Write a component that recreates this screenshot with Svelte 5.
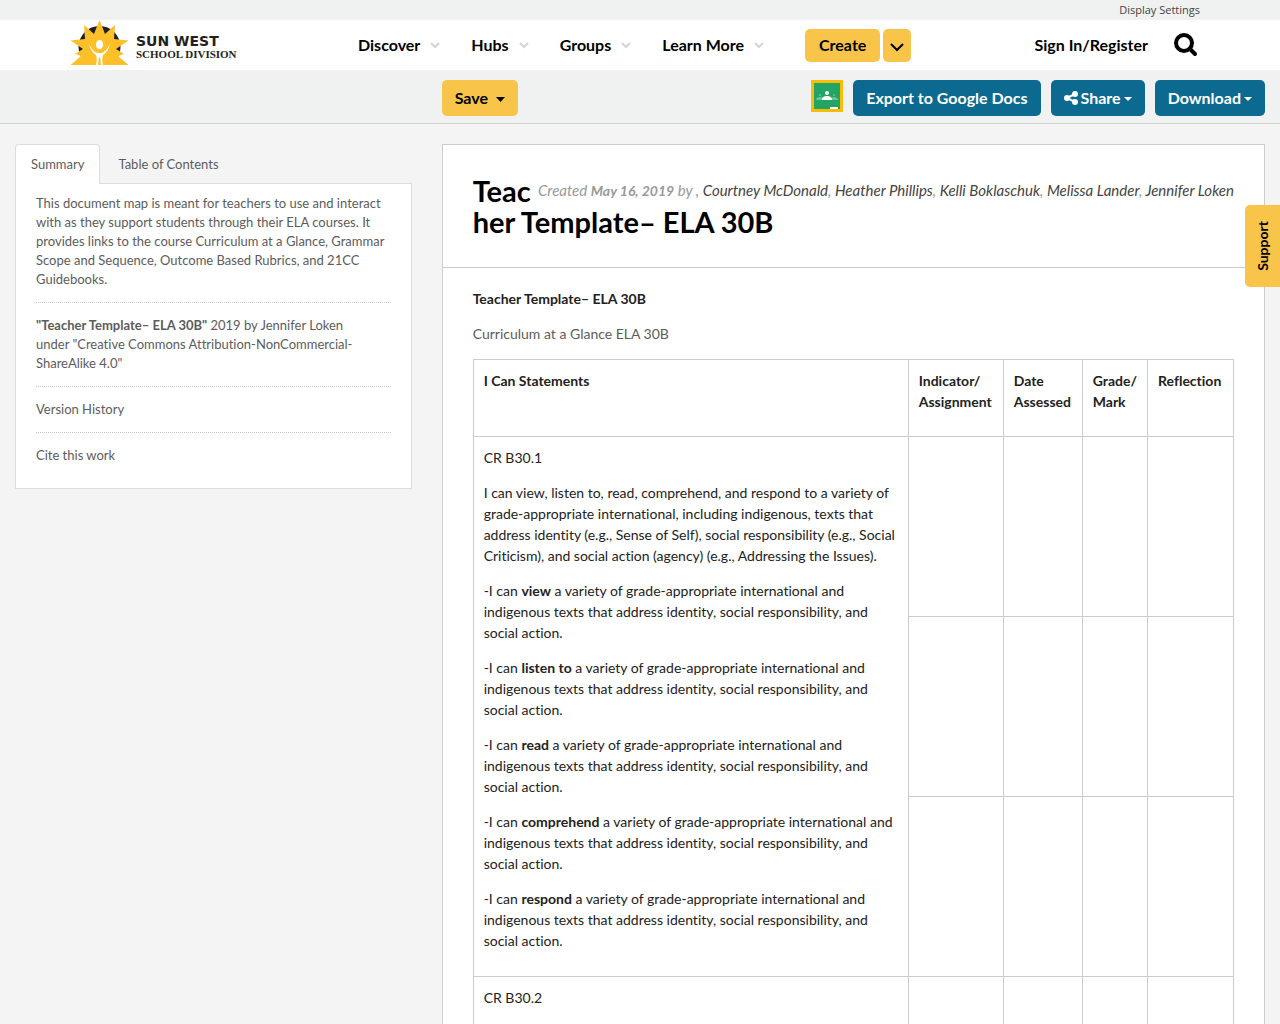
<script>
  const menu = ['Discover', 'Hubs', 'Groups', 'Learn More'];

  const authors = [
    'Courtney McDonald',
    'Heather Phillips',
    'Kelli Boklaschuk',
    'Melissa Lander',
    'Jennifer Loken',
  ];

  const skills = ['view', 'listen to', 'read', 'comprehend', 'respond'];

  let tab = 'summary';
</script>

<div class="settings">
  <div class="container">
    <a href="#settings">Display Settings</a>
  </div>
</div>

<header>
  <div class="container bar">
    <a class="logo" href="#home" aria-label="Sun West School Division">
      <svg width="60" height="45" viewBox="0 0 60 45">
        <circle cx="29.500" cy="27" r="21" fill="#231f20" />
        <path
          d="M29.500 0L35 14l10-9-1 14 14.500 1.500L46 29l8 5-6 2 10.500 9H.5L11 36l-6-2 8-5L.5 20.500 15 19 14 5l10 9z"
          fill="#fdc029"
        />
        <ellipse cx="29.500" cy="24.500" rx="3.500" ry="4.500" fill="#fff" />
        <path
          d="M19 24c1 5 4 9 7 11 1 3 1 6 0 10h2l1-8h1l1 8h2c-1-4-1-7 0-10 3-2 6-6 7-11-2 4-5 8-8 9h-5c-3-1-6-5-8-9z"
          fill="#fff"
        />
      </svg>
      <span class="words">
        <span class="name">SUN WEST</span>
        <span class="sub">SCHOOL DIVISION</span>
      </span>
    </a>

    <nav>
      {#each menu as item}
        <a href="#menu">
          {item}
          <svg width="10" height="9" viewBox="0 0 10 9">
            <path d="M1 3l4 4 4-4" fill="none" stroke="#d4d4d4" stroke-width="2" />
          </svg>
        </a>
      {/each}
    </nav>

    <div class="create">
      <button class="yellow">Create</button>
      <button class="yellow more" aria-label="More create options">
        <svg width="14" height="9" viewBox="0 0 14 9">
          <path d="M1 1l6 6 6-6" fill="none" stroke="#000" stroke-width="2" />
        </svg>
      </button>
    </div>

    <a class="signin" href="#signin">Sign In/Register</a>
    <button class="search" aria-label="Search">
      <svg width="24" height="24" viewBox="0 0 24 24">
        <circle cx="10" cy="10" r="8" fill="none" stroke="#000" stroke-width="4" />
        <path d="M16 16l5 5" stroke="#000" stroke-width="4" stroke-linecap="round" />
      </svg>
    </button>
  </div>
</header>

<div class="toolbar">
  <div class="left"></div>
  <div class="right">
    <button class="yellow save">
      Save
      <svg width="9" height="7" viewBox="0 0 9 7"><path d="M0 2h9L4.500 7z" /></svg>
    </button>
    <a class="classroom" href="#classroom" aria-label="Google Classroom">
      <svg width="32" height="32" viewBox="0 0 32 32">
        <path fill="#fbbc05" d="M0 0h32v32H0z" />
        <path fill="#21a464" d="M3 3h26v26H3z" />
        <path
          fill="#69c596"
          d="M5 20c0-2 2-3 4-3s4 1 4 3zM19 20c0-2 2-3 4-3s4 1 4 3z"
        />
        <circle cx="9" cy="15" r="1" fill="#69c596" />
        <circle cx="23" cy="15" r="1" fill="#69c596" />
        <circle cx="16" cy="13" r="2" fill="#fff" />
        <path fill="#fff" d="M11 20c0-3 2-4 5-4s5 1 5 4zM19 27h8v2h-8z" />
      </svg>
    </a>
    <button class="blue">Export to Google Docs</button>
    <button class="blue">
      <svg width="14" height="14" viewBox="0 0 14 14">
        <path d="M11 3L3 7l8 4" fill="none" stroke="#fff" stroke-width="2" />
        <circle cx="11" cy="3" r="3" /><circle cx="3" cy="7" r="3" /><circle cx="11" cy="11" r="3" />
      </svg>
      Share
      <svg width="8" height="6" viewBox="0 0 8 6"><path d="M0 2h8L4 6z" /></svg>
    </button>
    <button class="blue">
      Download
      <svg width="8" height="6" viewBox="0 0 8 6"><path d="M0 2h8L4 6z" /></svg>
    </button>
  </div>
</div>

<div class="page">
  <aside class="left">
    <div class="tabs">
      <button class:active={tab === 'summary'} on:click={() => (tab = 'summary')}>Summary</button>
      <button class:active={tab === 'toc'} on:click={() => (tab = 'toc')}>Table of Contents</button>
    </div>
    <div class="panel">
      {#if tab === 'summary'}
        <p>
          This document map is meant for teachers to use and interact with as they support students
          through their ELA courses. It provides links to the course Curriculum at a Glance, Grammar
          Scope and Sequence, Outcome Based Rubrics, and 21CC Guidebooks.
        </p>
        <p>
          <strong>"Teacher Template– ELA 30B"</strong> 2019 by Jennifer Loken<br />
          under
          <a href="#license">"Creative Commons Attribution-NonCommercial-<wbr />ShareAlike 4.0"</a>
        </p>
        <p><a href="#history">Version History</a></p>
        <p><a href="#cite">Cite this work</a></p>
      {:else}
        <p><a href="#top">Teacher Template– ELA 30B</a></p>
      {/if}
    </div>
  </aside>

  <main class="right">
    <article>
      <div class="heading">
        <div class="meta">
          Created <strong>May 16, 2019</strong> by
          {#each authors as author}{', '}<a href="#author">{author}</a>{/each}
        </div>
        <h1>Teacher Template– ELA 30B</h1>
      </div>
      <div class="content">
        <p class="lead"><strong>Teacher Template– ELA 30B</strong></p>
        <p>Curriculum at a Glance ELA 30B</p>
        <table>
          <thead>
            <tr>
              <th><p>I Can Statements</p></th>
              <th class="indicator"><p>Indicator/ Assignment</p></th>
              <th class="date"><p>Date Assessed</p></th>
              <th class="grade"><p>Grade/ Mark</p></th>
              <th class="reflection"><p>Reflection</p></th>
            </tr>
          </thead>
          <tbody>
            <tr>
              <td rowspan="3">
                <p>CR B30.1</p>
                <p>
                  I can view, listen to, read, comprehend, and respond to a variety of
                  grade-appropriate international, including indigenous, texts that address identity
                  (e.g., Sense of Self), social responsibility (e.g., Social Criticism), and social
                  action (agency) (e.g., Addressing the Issues).
                </p>
                {#each skills as skill}
                  <p>
                    -I can <strong>{skill}</strong> a variety of grade-appropriate international and
                    indigenous texts that address identity, social responsibility, and social action.
                  </p>
                {/each}
              </td>
              <td class="blank"></td><td></td><td></td><td></td>
            </tr>
            <tr><td class="blank"></td><td></td><td></td><td></td></tr>
            <tr><td class="blank"></td><td></td><td></td><td></td></tr>
            <tr>
              <td><p>CR B30.2</p></td>
              <td class="blank"></td><td></td><td></td><td></td>
            </tr>
          </tbody>
        </table>
      </div>
    </article>
  </main>
</div>

<button class="support">Support</button>

<style>
  :global(body) {
    background: #f4f4f4;
    color: #5c5c5c;
    font: 14px/21px Lato, sans-serif;
    font-variant-ligatures: none;
  }

  a {
    color: inherit;
    text-decoration: none;
  }

  button {
    margin: 0;
    padding: 0;
    border: none;
    background: none;
    color: inherit;
    font: inherit;
    cursor: pointer;
  }

  .container {
    max-width: 1140px;
    margin: 0 auto;
  }

  .settings {
    background: #f0f2f2;
    font: 11px/20px 'Open Sans', sans-serif;
    color: #444;
    text-align: right;
  }

  .settings a {
    margin-right: 10px;
  }

  header {
    background: #fff;
    color: #000;
    font-size: 16px;
    font-weight: 700;
  }

  .bar {
    display: flex;
    align-items: center;
    height: 50px;
  }

  .logo {
    display: flex;
    align-items: center;
    align-self: flex-start;
    gap: 6px;
    width: 288px;
    color: #231f20;
  }

  .words {
    display: flex;
    flex-direction: column;
    padding-top: 8px;
  }

  .name {
    font: bold 14px/14px 'DejaVu Sans', sans-serif;
  }

  .sub {
    font: bold 11px/12px 'Liberation Serif', serif;
  }

  nav {
    display: flex;
    gap: 31px;
    padding-bottom: 2px;
    white-space: nowrap;
  }

  nav a {
    display: flex;
    align-items: center;
    gap: 10px;
  }

  .create {
    display: flex;
    gap: 3px;
    margin-left: 41px;
  }

  .yellow {
    padding: 0 13px;
    border-radius: 5px;
    background: #f8c54a;
    color: #000;
    font-size: 16px;
    font-weight: 700;
  }

  .create .yellow {
    padding: 0 14px 2px;
    line-height: 31px;
  }

  .create .more {
    padding: 0 7px;
  }

  .signin {
    margin-left: auto;
    padding-bottom: 2px;
    white-space: nowrap;
  }

  .search {
    display: flex;
    margin: 0 12px 0 26px;
  }

  .toolbar {
    display: flex;
    border-bottom: 1px solid #d0d2d2;
    background: #f0f2f2;
  }

  .left,
  .right {
    box-sizing: border-box;
    padding: 0 15px;
  }

  .left {
    width: 33.3333%;
  }

  .right {
    width: 66.6667%;
  }

  .toolbar .right {
    display: flex;
    gap: 10px;
    padding-top: 10px;
    padding-bottom: 7px;
  }

  .save {
    display: flex;
    align-items: center;
    gap: 8px;
    margin-right: auto;
    line-height: 36px;
  }

  .classroom svg {
    display: block;
  }

  .blue {
    display: flex;
    align-items: center;
    gap: 3px;
    padding: 0 13px;
    border-radius: 5px;
    background: #0c698f;
    color: #fff;
    fill: #fff;
    font-size: 16px;
    font-weight: 700;
    line-height: 36px;
  }

  .page {
    display: flex;
    align-items: flex-start;
    padding-top: 20px;
  }

  .tabs {
    display: flex;
    gap: 2px;
    margin-bottom: -1px;
    font-size: 13px;
  }

  .tabs button {
    padding: 0 15px;
    border: 1px solid transparent;
    border-bottom: none;
    border-radius: 4px 4px 0 0;
    line-height: 39px;
  }

  .tabs .active {
    position: relative;
    border-color: #ddd;
    background: #fff;
  }

  .panel {
    padding: 10px 20px;
    border: 1px solid #ddd;
    background: #fff;
    font-size: 13px;
    line-height: 19px;
  }

  .panel p {
    margin: 0;
    padding: 13px 0;
    border-bottom: 1px dotted #ccc;
  }

  .panel p:first-child {
    padding-top: 0;
  }

  .panel p:last-child {
    border: none;
  }

  article {
    border: 1px solid #ccc;
    background: #fff;
  }

  .heading {
    padding: 30px;
    border-bottom: 1px solid #ccc;
  }

  .meta {
    float: right;
    color: #999;
    font-size: 15px;
    font-style: italic;
    line-height: 31px;
  }

  .meta strong {
    font-size: 14px;
  }

  .meta a {
    color: #444;
  }

  h1 {
    margin: 0;
    color: #000;
    font-size: 29px;
    line-height: 31px;
    word-break: break-all;
  }

  .content {
    padding: 20px 30px;
  }

  .content p {
    margin: 0 0 14px;
  }

  .content .lead {
    color: #222;
  }

  table {
    width: 100%;
    margin-top: 15px;
    border-collapse: collapse;
    color: #222;
  }

  th,
  td {
    padding: 10px;
    border: 1px solid #ccc;
    text-align: left;
    vertical-align: top;
  }

  .indicator {
    width: 74px;
  }

  .date {
    width: 58px;
  }

  .grade {
    width: 44px;
  }

  .reflection {
    width: 65px;
  }

  .blank {
    height: 159px;
  }

  .support {
    position: fixed;
    top: 205px;
    right: 0;
    width: 35px;
    height: 82px;
    border-radius: 5px 0 0 5px;
    background: #f8c54a;
    color: #000;
    font-weight: 700;
    writing-mode: sideways-lr;
  }
</style>
